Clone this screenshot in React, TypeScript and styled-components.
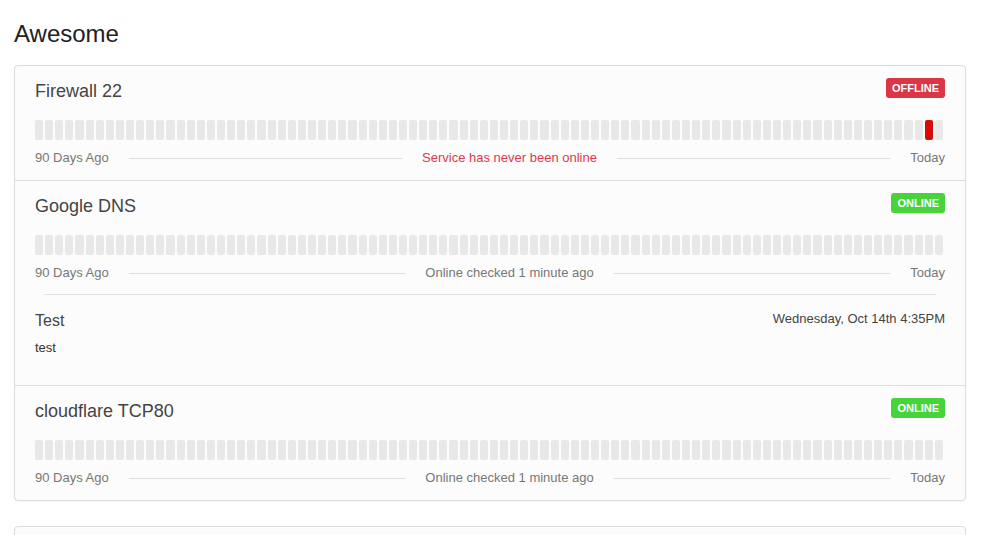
import React from 'react';
import styled, { createGlobalStyle } from 'styled-components';

type Day = 'none' | 'down' | 'up';

type Service = {
  name: string,
  online: boolean,
  status: string,
  failing?: boolean,
  days: Day[],
  messages?: { title: string, date: string, body: string }[],
}

const GlobalStyle = createGlobalStyle`
  html, body {
    margin: 0;
    padding: 0;
    background: #ffffff;
    font-family: "Liberation Sans", Arial, sans-serif;
  }
`;

const Page = styled.div`
  width: 952px;
  padding: 17px 0 0 14px;
`;

const Heading = styled.h1`
  margin: 0 0 14px 0;
  font-size: 24px;
  font-weight: 400;
  line-height: 34px;
  color: #222;
`;

const Card = styled.div`
  background: #fcfcfc;
  border: 1px solid #dcdcdc;
  border-radius: 4px;
  margin-bottom: 25px;
  box-shadow: 0 1px 2px rgba(0, 0, 0, 0.04);
`;

const EmptyCard = styled(Card)`
  height: 40px;
`;

const ServiceRow = styled.div`
  padding: 13px 20px 14px 20px;
  border-top: 1px solid #dcdcdc;

  &:first-child {
    border-top: none;
  }
`;

const Header = styled.div`
  display: flex;
  justify-content: space-between;
  align-items: flex-start;
  height: 26px;
`;

const Name = styled.div`
  font-size: 18px;
  line-height: 25px;
  color: #444;
`;

const Badge = styled.span<{ $online: boolean }>`
  display: inline-block;
  margin-top: -1px;
  padding: 0 6px;
  height: 20px;
  line-height: 20px;
  font-size: 11px;
  font-weight: 700;
  color: #fff;
  border-radius: 3px;
  background: ${({ $online }) => ($online ? '#47d33a' : '#dc3546')};
`;

const Bars = styled.div`
  display: flex;
  gap: 2px;
  height: 20px;
  margin-top: 15px;
  padding-right: 2px;
`;

const Bar = styled.div<{ $day: Day }>`
  flex: 1;
  border-radius: 2px;
  background: ${({ $day }) => ($day === 'down' ? '#d90a0a' : $day === 'up' ? '#47d33a' : '#e8e8e8')};
`;

const Timeline = styled.div`
  display: flex;
  align-items: center;
  gap: 20px;
  margin-top: 10px;
  font-size: 13px;
  line-height: 16px;
  color: #777;
`;

const Line = styled.div`
  flex: 1;
  height: 1px;
  background: #dedede;
`;

const Status = styled.span<{ $failing?: boolean }>`
  color: ${({ $failing }) => ($failing ? '#e0384c' : '#777')};
`;

const Messages = styled.div`
  margin-top: 13px;
`;

const Divider = styled.div`
  height: 1px;
  margin: 0 9px;
  background: #e2e2e2;
`;

const Message = styled.div`
  padding: 16px 0 15px 0;
`;

const MessageHead = styled.div`
  display: flex;
  justify-content: space-between;
  align-items: flex-start;
`;

const MessageTitle = styled.div`
  font-size: 16px;
  line-height: 20px;
  color: #444;
`;

const MessageDate = styled.div`
  font-size: 13px;
  line-height: 16px;
  color: #444;
`;

const MessageBody = styled.div`
  margin-top: 9px;
  font-size: 13px;
  line-height: 16px;
  color: #333;
`;

const blank = (): Day[] => Array.from({ length: 90 }, () => 'none' as Day);

const firewallDays = blank();
firewallDays[88] = 'down';

const services: Service[] = [
  { name: 'Firewall 22', online: false, failing: true, status: 'Service has never been online', days: firewallDays },
  {
    name: 'Google DNS',
    online: true,
    status: 'Online checked 1 minute ago',
    days: blank(),
    messages: [{ title: 'Test', date: 'Wednesday, Oct 14th 4:35PM', body: 'test' }],
  },
  { name: 'cloudflare TCP80', online: true, status: 'Online checked 1 minute ago', days: blank() },
];

const App = () => {
  return (
    <Page>
      <GlobalStyle />
      <Heading>Awesome</Heading>
      <Card>
        {services.map((service) => (
          <ServiceRow key={service.name}>
            <Header>
              <Name>{service.name}</Name>
              <Badge $online={service.online}>{service.online ? 'ONLINE' : 'OFFLINE'}</Badge>
            </Header>
            <Bars>
              {service.days.map((day, i) => (
                <Bar key={i} $day={day} />
              ))}
            </Bars>
            <Timeline>
              <span>90 Days Ago</span>
              <Line />
              <Status $failing={service.failing}>{service.status}</Status>
              <Line />
              <span>Today</span>
            </Timeline>
            {service.messages && (
              <Messages>
                <Divider />
                {service.messages.map((m) => (
                  <Message key={m.title}>
                    <MessageHead>
                      <MessageTitle>{m.title}</MessageTitle>
                      <MessageDate>{m.date}</MessageDate>
                    </MessageHead>
                    <MessageBody>{m.body}</MessageBody>
                  </Message>
                ))}
              </Messages>
            )}
          </ServiceRow>
        ))}
      </Card>
      <EmptyCard />
    </Page>
  );
};

export default App;
